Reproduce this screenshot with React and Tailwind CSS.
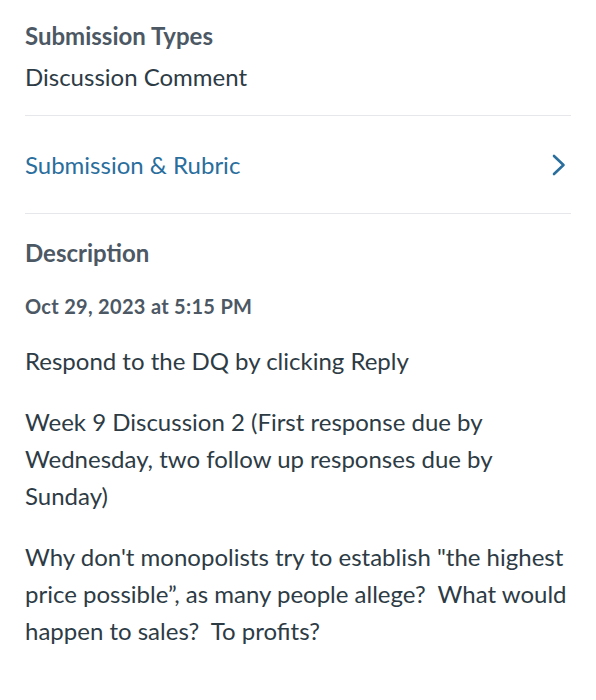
const Label = ({ children, className = "" }) => (
  <p className={`text-[24px] font-bold text-[#4c5864] leading-[30px] ${className}`}>{children}</p>
);

const Chevron = () => (
  <svg width="16" height="24" viewBox="0 0 16 24" className="mr-[4px]">
    <path d="M3 3 L12.5 12 L3 21" fill="none" stroke="#2a6e9d" strokeWidth="2.6" strokeLinecap="round" strokeLinejoin="round" />
  </svg>
);

export default function App() {
  return (
    <div className="w-[596px] h-[700px] bg-white font-['Lato',sans-serif] text-[#2d3b45] overflow-hidden">
      <div className="pl-[25px] pr-[25px] pt-[21px]">
        {/* Tipos de entrega */}
        <Label>Submission Types</Label>
        <p className="text-[24px] leading-[30px] mt-[11px]">Discussion Comment</p>
        <div className="h-px bg-[#e5e7ea] mt-[23px]" />

        <div className="flex items-center justify-between h-[97px]">
          <span className="text-[24px] text-[#2a6e9d]">Submission &amp; Rubric</span>
          <Chevron />
        </div>
        <div className="h-px bg-[#e5e7ea]" />

        {/* Descripción */}
        <Label className="mt-[24px]">Description</Label>
        <p className="text-[20px] font-bold text-[#4c5864] tracking-[0.3px] leading-[26px] mt-[25px]">Oct 29, 2023 at 5:15 PM</p>

        <div className="flex flex-col gap-[24px] mt-[23px] text-[24px] leading-[37px] w-[552px]">
          <p>Respond to the DQ by clicking Reply</p>
          <p>Week 9 Discussion 2 (First response due by Wednesday, two follow up responses due by Sunday)</p>
          <p>
            Why don't monopolists try to establish "the highest price possible”, as many people allege?&nbsp; What would happen to sales?&nbsp; To profits?
          </p>
        </div>
      </div>
    </div>
  );
}
